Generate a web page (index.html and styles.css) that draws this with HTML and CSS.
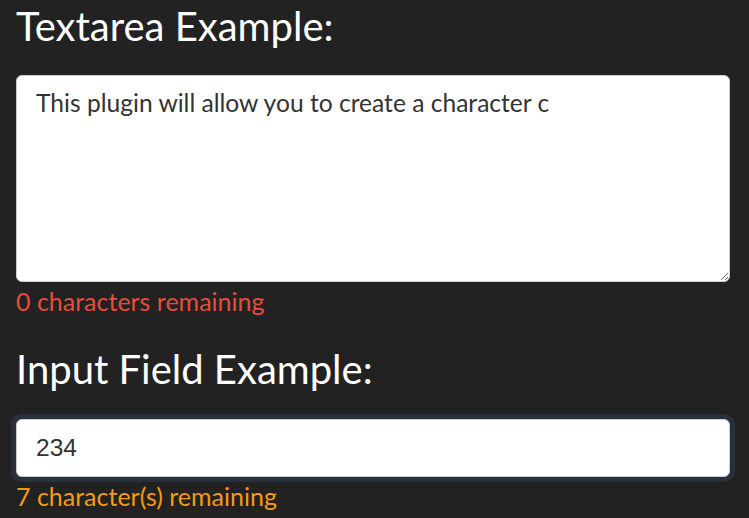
FILE: index.html
```html
<!DOCTYPE html>
<html lang="en">
<head>
    <meta charset="UTF-8">
    <meta name="viewport" content="width=device-width, initial-scale=1.0">
    <title>Character Counter Example</title>
    <link rel="stylesheet" href="styles.css">
</head>
<body>
    <div class="demo">
        <h2 class="demo-title">Textarea Example:</h2>
        <textarea class="demo-textarea" id="textarea">This plugin will allow you to create a character c</textarea>
        <div class="counter counter-empty" id="textareaCounter">0 characters remaining</div>

        <h2 class="demo-title">Input Field Example:</h2>
        <input type="text" class="demo-input" id="input" value="234">
        <div class="counter counter-warn" id="inputCounter">7 character(s) remaining</div>
    </div>
</body>
</html>
```

FILE: styles.css
```css
* {
    margin: 0;
    padding: 0;
    box-sizing: border-box;
}

body {
    font-family: Lato, 'Open Sans', sans-serif;
    background: #222222;
    color: #ffffff;
    overflow: hidden;
}

.demo {
    padding: 4px 19px 0 16px;
    display: flex;
    flex-direction: column;
}

.demo-title {
    font-size: 40px;
    font-weight: 400;
    line-height: 44px;
    margin-bottom: 27px;
}

.counter + .demo-title {
    margin-top: 29px;
    margin-bottom: 28px;
}

.demo-textarea {
    display: block;
    width: 100%;
    height: 207px;
    background: #ffffff;
    border: 1px solid #cccccc;
    border-radius: 6px;
    padding: 9px 19px;
    font-family: Lato, sans-serif;
    font-size: 24.6px;
    line-height: 36px;
    color: #333333;
    resize: vertical;
    outline: none;
}

.demo-input {
    display: block;
    width: 100%;
    height: 58px;
    background: #ffffff;
    border: 1px solid #cccccc;
    border-radius: 6px;
    padding: 0 19px;
    font-family: 'Liberation Sans', Arial, sans-serif;
    font-size: 24.5px;
    color: #333333;
    outline: none;
    box-shadow: 0 0 0 5px #28313b;
}

.counter {
    font-size: 25px;
    line-height: 33px;
    margin-top: 3px;
}

.counter-empty {
    color: #e74c3c;
}

.counter-warn {
    color: #f39c12;
    margin-top: 3px;
}
```
